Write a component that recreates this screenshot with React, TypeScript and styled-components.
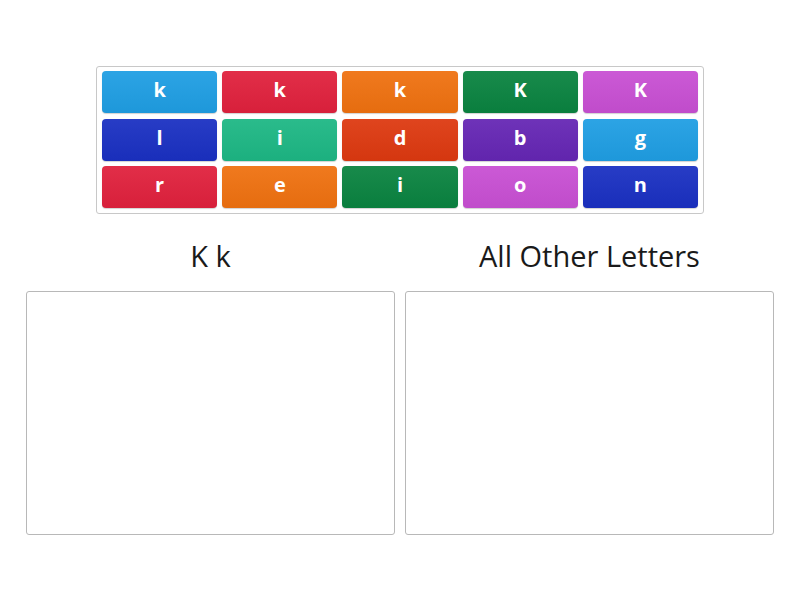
import React from 'react';
import styled, { createGlobalStyle } from 'styled-components';

const GlobalStyle = createGlobalStyle`
  body {
    margin: 0;
    background: #ffffff;
    font-family: "Open Sans", "Liberation Sans", sans-serif;
  }
`;

const Page = styled.div`
  width: 800px;
  height: 600px;
  display: flex;
  flex-direction: column;
  align-items: center;
  padding-top: 66px;
  box-sizing: border-box;
`;

const TileBoard = styled.div`
  width: 608px;
  box-sizing: border-box;
  border: 1px solid #c8c8c8;
  border-radius: 3px;
  padding: 4px 5px 5px;
  display: grid;
  grid-template-columns: repeat(5, 1fr);
  grid-auto-rows: 42px;
  gap: 5.5px 5px;
`;

const Tile = styled.div<{ $bg: string }>`
  background: ${({ $bg }) => $bg};
  background-image: linear-gradient(to bottom, rgba(255, 255, 255, 0.06), rgba(0, 0, 0, 0.04));
  border-radius: 4px;
  box-shadow: 0 1px 1px rgba(0, 0, 0, 0.18);
  display: flex;
  align-items: center;
  justify-content: center;
  padding-bottom: 5px;
  box-sizing: border-box;
  color: #ffffff;
  font-size: 20px;
  font-weight: 700;
`;

const Columns = styled.div`
  width: 748px;
  display: grid;
  grid-template-columns: 1fr 1fr;
  column-gap: 10px;
  margin-top: 22px;
`;

const Group = styled.div`
  display: flex;
  flex-direction: column;
`;

const GroupTitle = styled.div`
  text-align: center;
  font-size: 29px;
  line-height: 40px;
  color: #1a1a1a;
  margin-bottom: 15px;
`;

const DropBox = styled.div`
  height: 244px;
  border: 1px solid #b8b8b8;
  border-radius: 3px;
  box-sizing: border-box;
`;

const tiles: Array<{ letter: string; color: string }> = [
  { letter: 'k', color: '#1f9ee3' },
  { letter: 'k', color: '#e0213d' },
  { letter: 'k', color: '#ef7110' },
  { letter: 'K', color: '#0a8340' },
  { letter: 'K', color: '#c84fd3' },
  { letter: 'l', color: '#1a30c2' },
  { letter: 'i', color: '#1db784' },
  { letter: 'd', color: '#dd3910' },
  { letter: 'b', color: '#6526b4' },
  { letter: 'g', color: '#1f9ee3' },
  { letter: 'r', color: '#e0213d' },
  { letter: 'e', color: '#ef7110' },
  { letter: 'i', color: '#0a8340' },
  { letter: 'o', color: '#c84fd3' },
  { letter: 'n', color: '#1a30c2' },
];

const groups = ['K k', 'All Other Letters'];

const App: React.FC = () => {
  return (
    <Page>
      <GlobalStyle />
      <TileBoard>
        {tiles.map((tile, idx) => (
          <Tile key={idx} $bg={tile.color}>
            {tile.letter}
          </Tile>
        ))}
      </TileBoard>

      <Columns>
        {groups.map((title) => (
          <Group key={title}>
            <GroupTitle>{title}</GroupTitle>
            <DropBox />
          </Group>
        ))}
      </Columns>
    </Page>
  );
};

export default App;
